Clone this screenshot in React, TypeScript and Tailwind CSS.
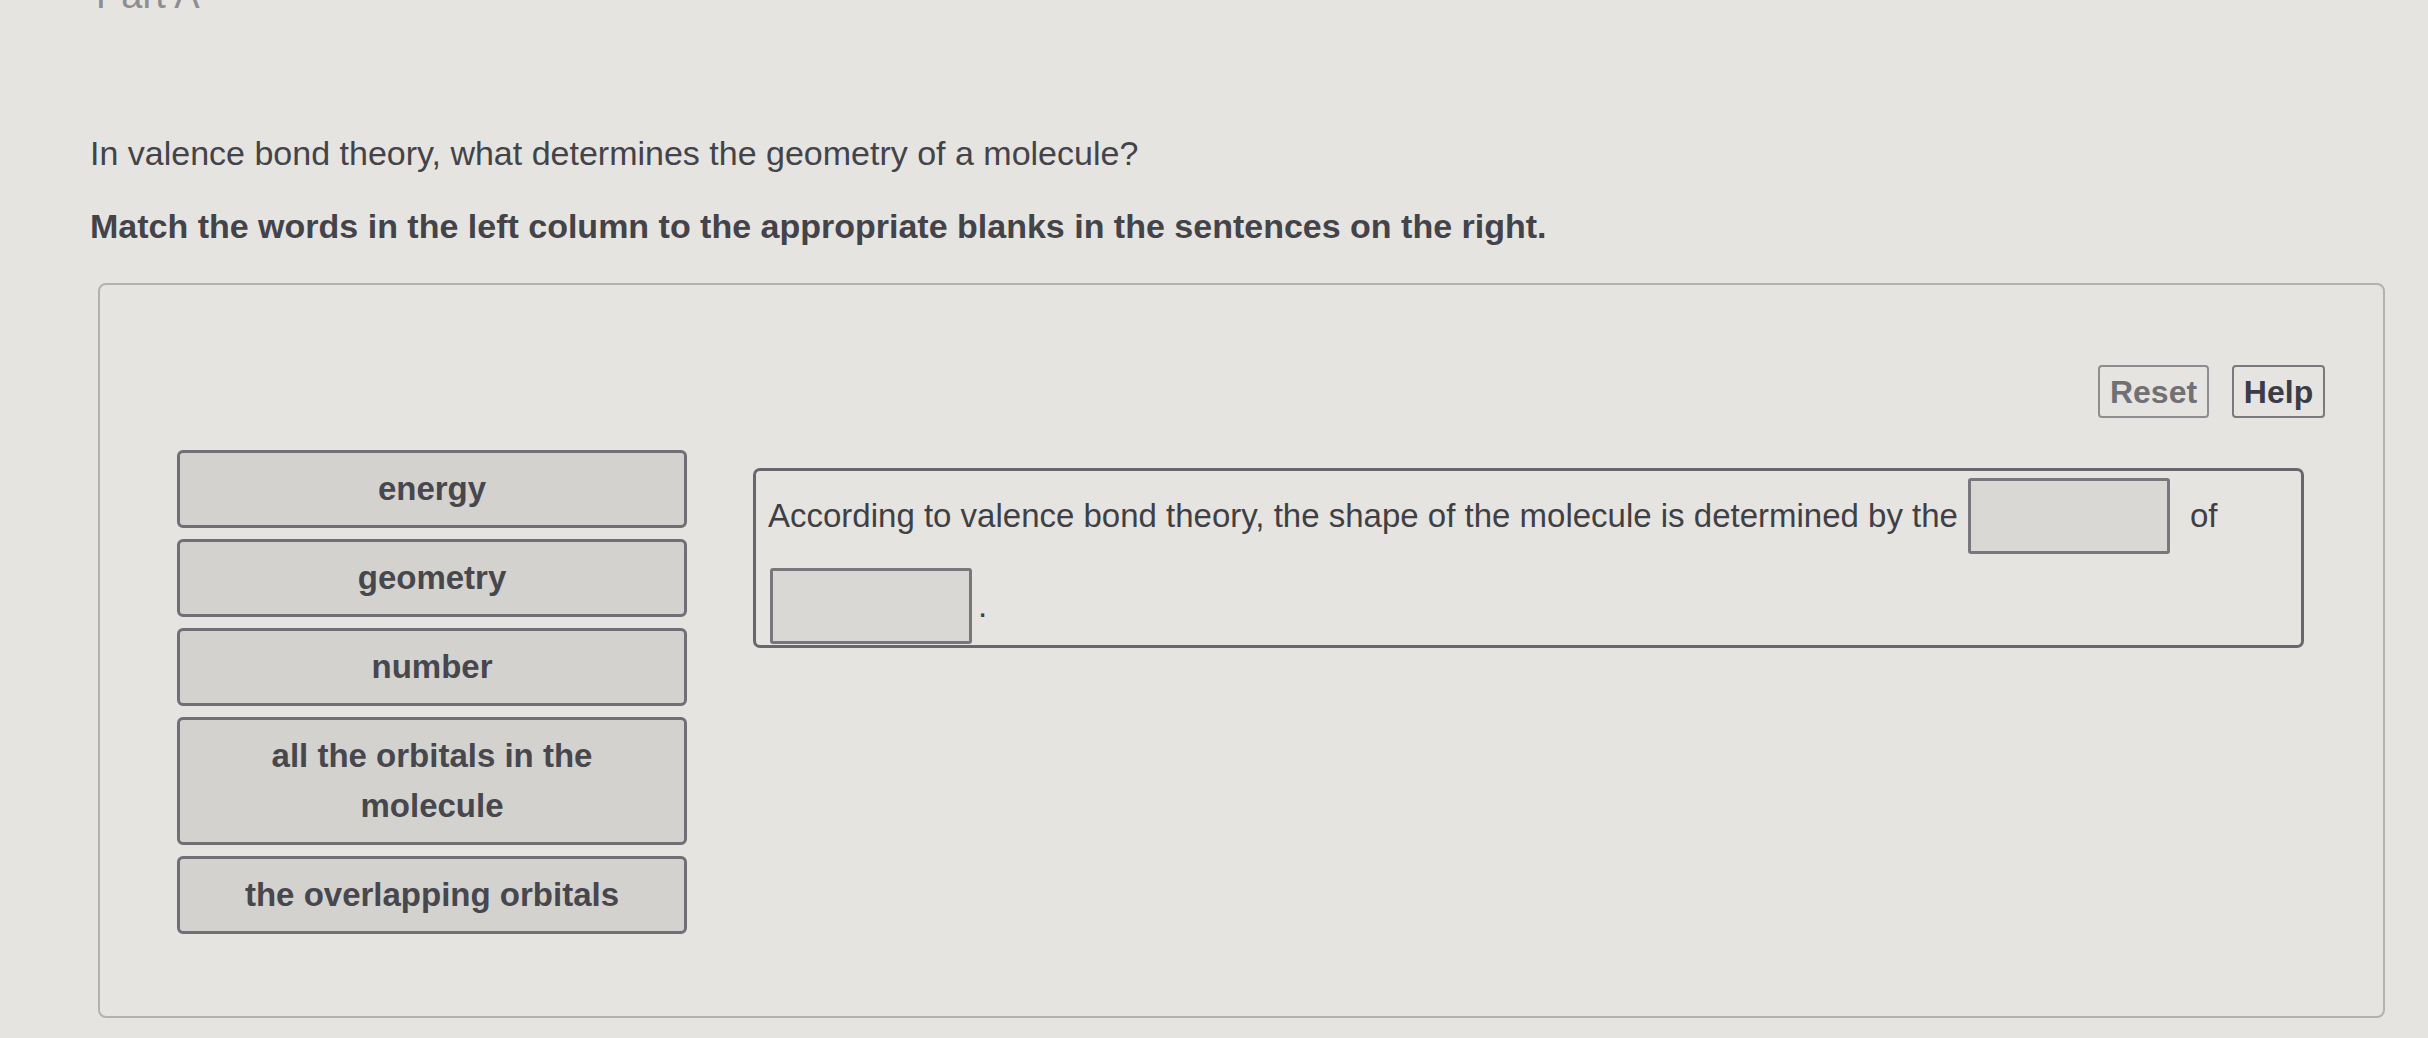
import React from "react";

const items = [
  { label: "energy", tall: false },
  { label: "geometry", tall: false },
  { label: "number", tall: false },
  { label: "all the orbitals in the molecule", tall: true },
  { label: "the overlapping orbitals", tall: false },
];

function Blank({ className = "" }: { className?: string }) {
  return (
    <span
      className={
        "inline-block align-middle w-[202px] h-[76px] my-[7px] rounded-[3px] border-[3px] border-[#77777c] bg-[#d9d8d5] " +
        className
      }
    />
  );
}

export default function App() {
  return (
    <div
      className="min-h-[1038px] w-[2428px] overflow-hidden bg-[#e5e4e0] pl-[90px] text-[#434349]"
      style={{ fontFamily: '"Liberation Sans", Arial, sans-serif' }}
    >
      {/* Part heading, cut off by the top edge */}
      <div className="-mt-[24px] pl-[6px] text-[38px] leading-none text-[#8d8d94]">Part A</div>

      <p className="mt-[119px] text-[34px] leading-[40px]">
        In valence bond theory, what determines the geometry of a molecule?
      </p>
      <p className="mt-[33px] text-[34px] font-bold leading-[40px]">
        Match the words in the left column to the appropriate blanks in the sentences on the right.
      </p>

      {/* Question box */}
      <div className="ml-[8px] mt-[37px] h-[735px] w-[2287px] rounded-[8px] border-2 border-[#b3b2af] pl-[77px] pt-[80px]">
        <div className="flex justify-end gap-[23px] pr-[58px]">
          <button className="h-[53px] w-[111px] rounded-[4px] border-2 border-[#8e8e90] text-[32px] font-bold text-[#717175]">
            Reset
          </button>
          <button className="h-[53px] w-[93px] rounded-[4px] border-2 border-[#7a7a7e] text-[32px] font-bold text-[#3c3c48]">
            Help
          </button>
        </div>

        <div className="mt-[32px] flex items-start">
          <div className="flex w-[510px] flex-col gap-[11px]">
            {items.map((it) => (
              <div
                key={it.label}
                className={
                  "flex items-center justify-center rounded-[6px] border-[3px] border-[#6f6f75] bg-[#d3d2cf] px-[60px] text-center text-[33px] font-bold text-[#47474d] " +
                  (it.tall ? "h-[128px] leading-[50px]" : "h-[78px] leading-[38px]")
                }
              >
                {it.label}
              </div>
            ))}
          </div>

          <div className="ml-[66px] mt-[18px] h-[180px] w-[1551px] rounded-[7px] border-[3px] border-[#67676d] pl-[12px] pr-[20px] text-[33px] leading-[38px] text-[#3f3f45]">
            <span className="align-middle">
              According to valence bond theory, the shape of the molecule is determined by the
            </span>
            <Blank className="ml-[10px]" />
            <span className="ml-[20px] align-middle">of</span>
            <br />
            <Blank className="ml-[2px]" />
            <span className="ml-[6px] align-middle">.</span>
          </div>
        </div>
      </div>
    </div>
  );
}
